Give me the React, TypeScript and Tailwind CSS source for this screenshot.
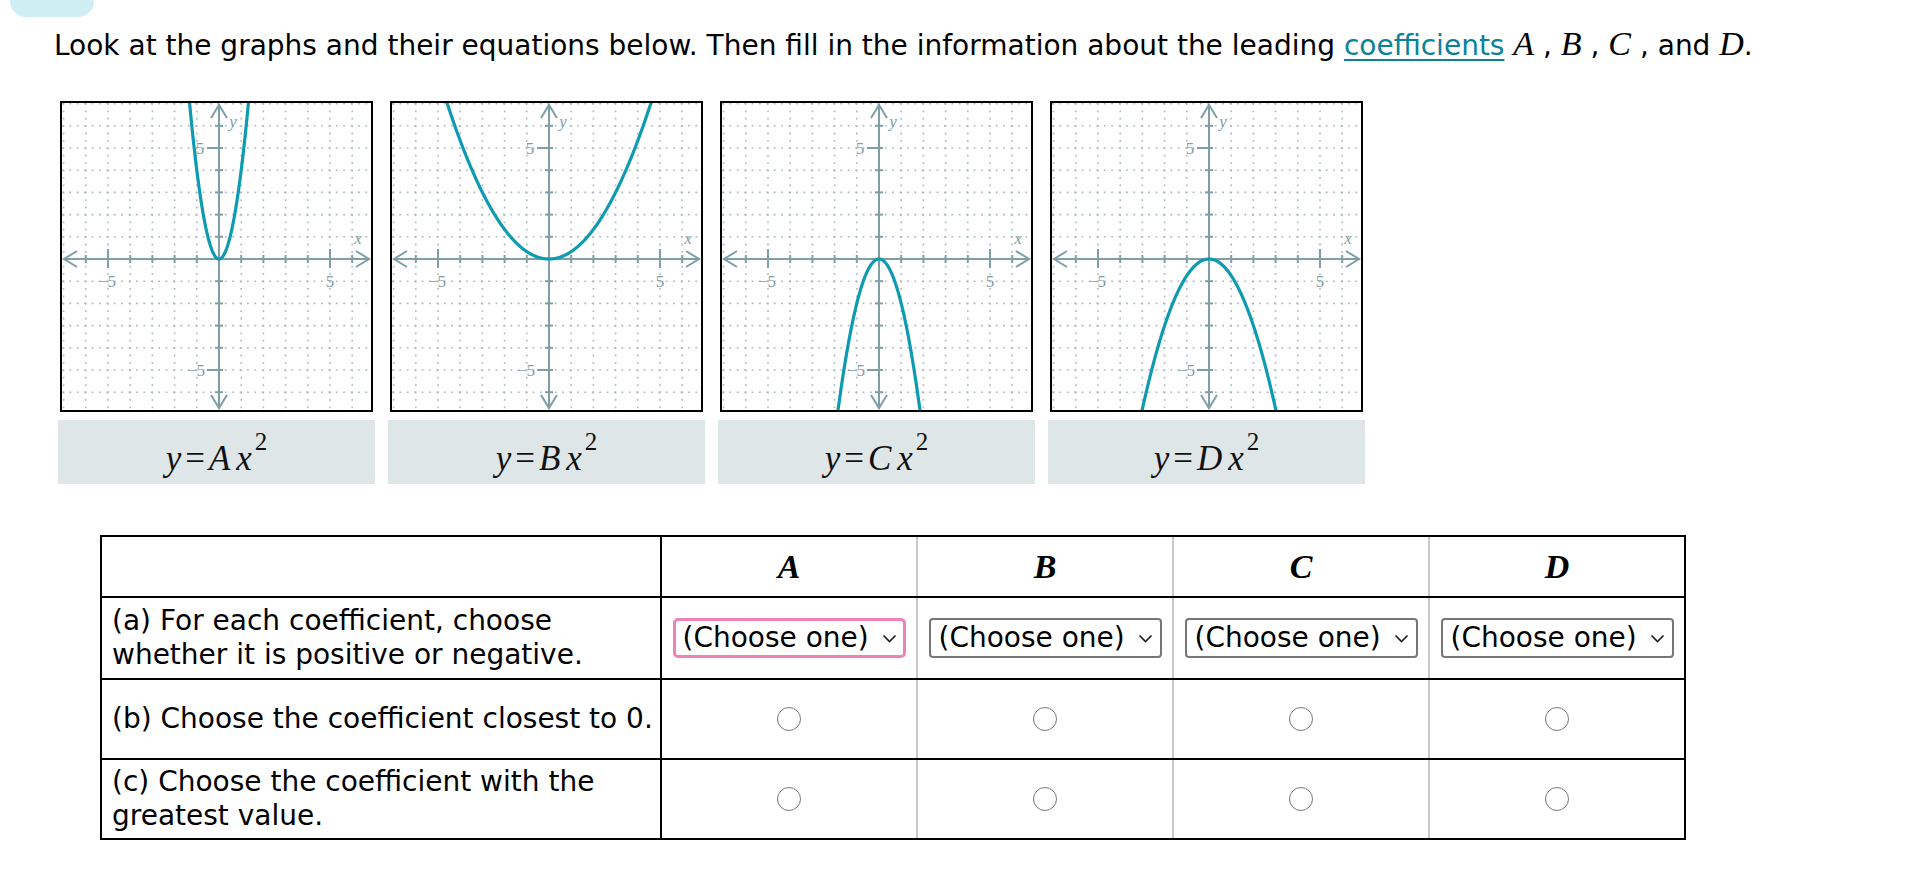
import React from "react";

// unit size of the grid and the origin inside the svg (inner area of the 313x311 box)
const U = 22.2;
const W = 309;
const H = 307;
const OX = 157;
const OY = 156;

const AXIS = "#7f9ea6";
const GRID = "#a9bcc1";
const CURVE = "#0e9bb1";

function Graph({ a }: { a: number }) {
  const pts: string[] = [];
  for (let x = -7.6; x <= 7.6; x += 0.02) {
    const y = a * x * x;
    if (Math.abs(y) > 8.5) continue;
    pts.push(`${(OX + x * U).toFixed(2)},${(OY - y * U).toFixed(2)}`);
  }

  const steps = [-7, -6, -5, -4, -3, -2, -1, 1, 2, 3, 4, 5, 6, 7];

  return (
    <div className="mx-auto h-[311px] w-[313px] border-2 border-black bg-white">
      <svg width={W} height={H} viewBox={`0 0 ${W} ${H}`}>
        {/* dotted grid */}
        {steps.map((k) => (
          <line
            key={`v${k}`}
            x1={OX + k * U}
            y1={0}
            x2={OX + k * U}
            y2={H}
            stroke={GRID}
            strokeWidth={1.6}
            strokeDasharray="1.8 5.6"
          />
        ))}
        {steps.map((k) => (
          <line
            key={`h${k}`}
            x1={0}
            y1={OY - k * U}
            x2={W}
            y2={OY - k * U}
            stroke={GRID}
            strokeWidth={1.6}
            strokeDasharray="1.8 5.6"
          />
        ))}

        {/* axes */}
        <line x1={1} y1={OY} x2={W - 1} y2={OY} stroke={AXIS} strokeWidth={2} />
        <line x1={OX} y1={1} x2={OX} y2={H - 1} stroke={AXIS} strokeWidth={2} />
        <g fill="none" stroke={AXIS} strokeWidth={2}>
          <polyline points={`${15},${OY - 8} 2,${OY} ${15},${OY + 8}`} />
          <polyline points={`${W - 15},${OY - 8} ${W - 2},${OY} ${W - 15},${OY + 8}`} />
          <polyline points={`${OX - 8},15 ${OX},2 ${OX + 8},15`} />
          <polyline points={`${OX - 8},${H - 15} ${OX},${H - 2} ${OX + 8},${H - 15}`} />
        </g>

        {/* ticks */}
        {steps
          .filter((k) => Math.abs(k) < 7)
          .map((k) => {
            const big = Math.abs(k) === 5;
            return (
              <g key={`t${k}`} stroke={AXIS} strokeWidth={2}>
                <line
                  x1={OX + k * U}
                  y1={OY - (big ? 10 : 4)}
                  x2={OX + k * U}
                  y2={OY + (big ? 9 : 4)}
                />
                <line
                  x1={OX - (big ? 12 : 4)}
                  y1={OY - k * U}
                  x2={OX + 4}
                  y2={OY - k * U}
                />
              </g>
            );
          })}

        {/* labels */}
        <g fill={AXIS} fontFamily="'Liberation Serif', serif" fontSize={17} textAnchor="middle">
          <text x={OX - 5 * U - 1} y={OY + 28}>−5</text>
          <text x={OX + 5 * U} y={OY + 28}>5</text>
          <text x={OX - 19} y={OY - 5 * U + 6}>5</text>
          <text x={OX - 23} y={OY + 5 * U + 6}>−5</text>
          <text x={OX + 14} y={OY - 132} fontStyle="italic">y</text>
          <text x={OX + 139} y={OY - 15} fontStyle="italic">x</text>
        </g>

        {/* parabola */}
        <polyline
          points={pts.join(" ")}
          fill="none"
          stroke={CURVE}
          strokeWidth={3.2}
          strokeLinejoin="round"
        />
      </svg>
    </div>
  );
}

function Equation({ letter }: { letter: string }) {
  return (
    <div className="mt-[8px] flex h-[64px] items-center justify-center bg-[#dfe6e8] pt-[16px]">
      <span className="font-['Liberation_Serif',serif] text-[35px] leading-[30px] text-[#111]">
        <i>y</i>
        <span className="mx-[4px]">=</span>
        <i>{letter}</i>
        <i className="ml-[6px]">x</i>
        <span className="relative -top-[20px] ml-[3px] text-[25px]">2</span>
      </span>
    </div>
  );
}

function Chevron() {
  return (
    <svg width="15" height="9" viewBox="0 0 15 9">
      <polyline points="1.5,1.5 7.5,7.5 13.5,1.5" fill="none" stroke="#222" strokeWidth="1.7" />
    </svg>
  );
}

function Select({ focused }: { focused?: boolean }) {
  return (
    <div
      className={
        focused
          ? "flex h-[40px] w-[233px] items-center justify-between rounded-[5px] border-[3px] border-[#f083b5] pl-[7px] pr-[6px]"
          : "flex h-[40px] w-[233px] items-center justify-between rounded-[4px] border-2 border-[#767676] pl-[8px] pr-[7px]"
      }
    >
      <span className="text-[28px] leading-none">(Choose one)</span>
      <Chevron />
    </div>
  );
}

function Radio() {
  return <span className="block h-[24px] w-[24px] rounded-full border-[1.5px] border-[#767676]" />;
}

const letters = ["A", "B", "C", "D"];
const coefs = [4, 1 / 3, -2, -0.75];

function DataCells({ kind }: { kind: "select" | "radio" }) {
  return (
    <>
      {letters.map((l, i) => (
        <div
          key={l}
          className={
            i > 0
              ? "flex flex-1 items-center justify-center border-l-2 border-[#c8c8c8]"
              : "flex flex-1 items-center justify-center"
          }
        >
          {kind === "select" ? <Select focused={i === 0} /> : <Radio />}
        </div>
      ))}
    </>
  );
}

function M({ children }: { children: React.ReactNode }) {
  return <span className="font-['Liberation_Serif',serif] text-[34px] leading-none italic">{children}</span>;
}

export default function App() {
  return (
    <div className="min-h-[886px] w-[1908px] bg-white font-['DejaVu_Sans',sans-serif] text-black">
      <div className="ml-[10px] h-[17px] w-[84px] rounded-b-[16px] bg-[#cfeef4]" />

      <p className="mt-[10px] h-[34px] pl-[54px] text-[28px] leading-[34px]">
        Look at the graphs and their equations below. Then fill in the information about the leading{" "}
        <span className="text-[#0b819a] underline decoration-[2px] underline-offset-[4px]">coefficients</span>{" "}
        <M>A</M> , <M>B</M> , <M>C</M> , and <M>D</M>.
      </p>

      <div className="ml-[58px] mt-[40px] flex gap-[13px]">
        {letters.map((l, i) => (
          <div key={l} className="w-[317px]">
            <Graph a={coefs[i]} />
            <Equation letter={l} />
          </div>
        ))}
      </div>

      <div className="ml-[100px] mt-[51px] w-[1586px] border-2 border-black text-[28px] leading-[34px]">
        <div className="flex h-[59px]">
          <div className="w-[560px] border-r-2 border-black" />
          {letters.map((l, i) => (
            <div
              key={l}
              className={
                i > 0
                  ? "flex flex-1 items-center justify-center border-l-2 border-[#c8c8c8] font-['Liberation_Serif',serif] text-[34px] font-bold italic"
                  : "flex flex-1 items-center justify-center font-['Liberation_Serif',serif] text-[34px] font-bold italic"
              }
            >
              {l}
            </div>
          ))}
        </div>

        <div className="flex h-[82px] border-t-2 border-black">
          <div className="flex w-[560px] items-center border-r-2 border-black pl-[10px]">
            <span>
              (a) For each coefficient, choose
              <br />
              whether it is positive or negative.
            </span>
          </div>
          <DataCells kind="select" />
        </div>

        <div className="flex h-[80px] border-t-2 border-black">
          <div className="flex w-[560px] items-center border-r-2 border-black pl-[10px]">
            <span>(b) Choose the coefficient closest to 0.</span>
          </div>
          <DataCells kind="radio" />
        </div>

        <div className="flex h-[80px] border-t-2 border-black">
          <div className="flex w-[560px] items-center border-r-2 border-black pl-[10px]">
            <span>
              (c) Choose the coefficient with the
              <br />
              greatest value.
            </span>
          </div>
          <DataCells kind="radio" />
        </div>
      </div>
    </div>
  );
}
